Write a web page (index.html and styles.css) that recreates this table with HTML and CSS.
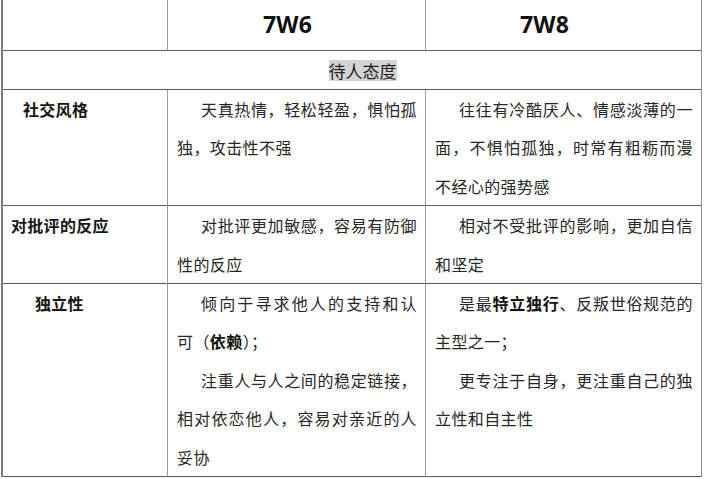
FILE: index.html
```html
<!DOCTYPE html>
<html lang="zh-CN">
<head>
<meta charset="utf-8">
<title>7W6 与 7W8</title>
<link rel="stylesheet" href="styles.css">
</head>
<body>
<div class="sheet">
  <div class="cell head"></div>
  <div class="cell head col2"><span class="type">7W6</span></div>
  <div class="cell head col3"><span class="type">7W8</span></div>

  <div class="cell section"><span class="mark">待人态度</span></div>

  <div class="cell label label-social">社交风格</div>
  <div class="cell text"><p>天真热情，轻松轻盈，惧怕孤独，攻击性不强</p></div>
  <div class="cell text col3"><p>往往有冷酷厌人、情感淡薄的一面，不惧怕孤独，时常有粗粝而漫不经心的强势感</p></div>

  <div class="cell label label-critic">对批评的反应</div>
  <div class="cell text"><p>对批评更加敏感，容易有防御性的反应</p></div>
  <div class="cell text col3"><p>相对不受批评的影响，更加自信和坚定</p></div>

  <div class="cell label label-indep">独立性</div>
  <div class="cell text">
    <p>倾向于寻求他人的支持和认<span class="keep">可（<b>依赖</b>）；</span></p>
    <p>注重人与人之间的稳定链接，相对依恋他人，容易对亲近的人妥协</p>
  </div>
  <div class="cell text col3">
    <p>是最<b>特立独行</b>、反叛世俗规范的主型之一；</p>
    <p>更专注于自身，更注重自己的独立性和自主性</p>
  </div>
</div>
</body>
</html>
```

FILE: styles.css
```css
html, body {
  margin: 0;
  padding: 0;
  background: #ffffff;
}

body {
  font-family: "Noto Sans CJK SC", "Noto Sans", sans-serif;
  color: #262626;
}

.sheet {
  display: grid;
  grid-template-columns: 165px 258px 275px;
  width: max-content;
  margin-left: 1px;
  border-left: 2px solid #7c7c7c;
  border-right: 1px solid #8a8a8a;
}

.cell {
  box-sizing: border-box;
  border-bottom: 1px solid #5c5c5c;
  border-right: 1px solid #9c9c9c;
}

.cell.col3 {
  border-right: none;
}

.head {
  height: 51px;
  display: flex;
  align-items: center;
  padding-bottom: 2px;
}

.head.col2 {
  padding-left: 95px;
}

.head.col3 {
  padding-left: 94px;
}

.type {
  font-family: "Noto Sans", "Liberation Sans", sans-serif;
  font-weight: 700;
  font-size: 23px;
  color: #111111;
  letter-spacing: 0.2px;
}

.section {
  grid-column: 1 / -1;
  border-right: none;
  height: 39px;
  display: flex;
  align-items: center;
  justify-content: center;
  padding-left: 21px;
}

.mark {
  background: #d4d4d4;
  font-size: 17px;
  line-height: 21px;
  color: #222222;
}

.label {
  font-size: 16px;
  font-weight: 700;
  line-height: 38.4px;
  color: #161616;
  letter-spacing: 0.3px;
}

.label-social {
  padding-left: 20px;
}

.label-critic {
  padding-left: 8px;
}

.label-indep {
  padding-left: 32px;
}

.text {
  padding: 0 8px 0 9px;
  font-size: 16px;
  line-height: 38.4px;
  letter-spacing: 0.4px;
}

.text p {
  margin: 0;
  text-indent: 24px;
  text-align: justify;
}

.text b {
  font-weight: 700;
  color: #111111;
}

.keep {
  white-space: nowrap;
}
```
